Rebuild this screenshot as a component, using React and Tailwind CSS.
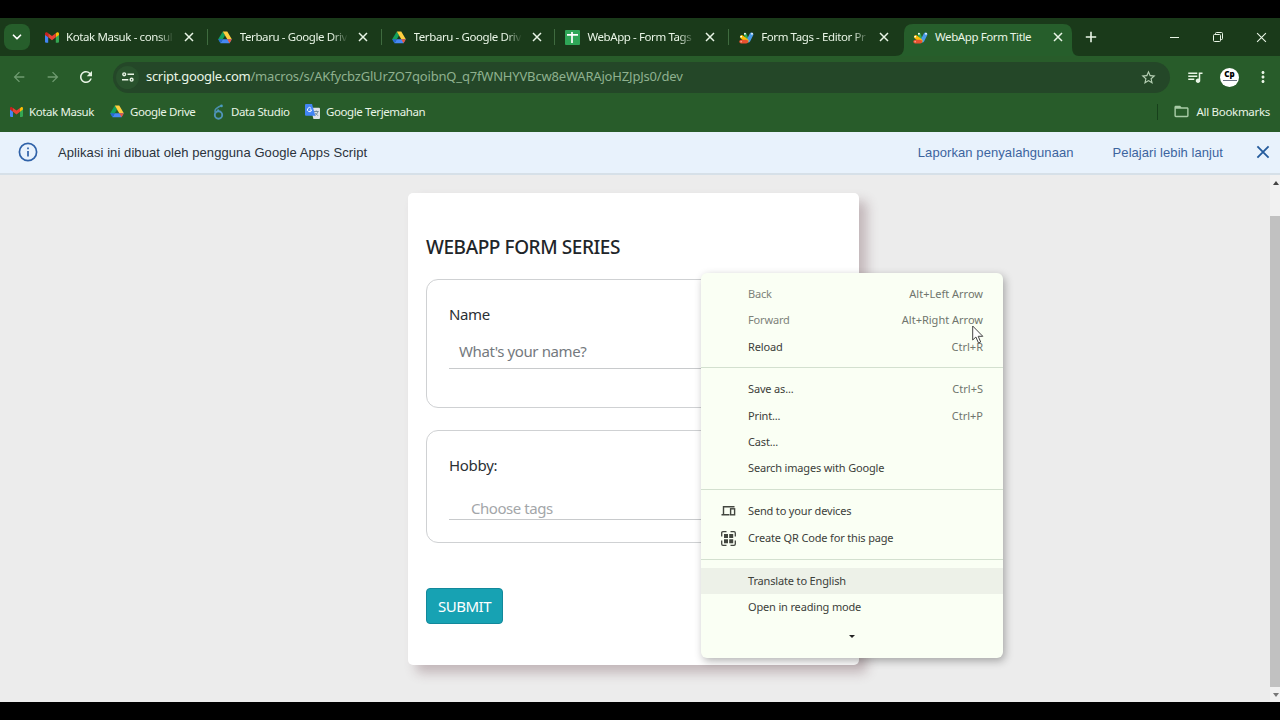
import { LuChevronDown } from "react-icons/lu";
import {
  MdArrowBack,
  MdArrowForward,
  MdRefresh,
  MdStarOutline,
  MdQueueMusic,
  MdMoreVert,
  MdFolderOpen,
} from "react-icons/md";

function GmailIcon({ className }) {
  return (
    <svg viewBox="0 0 24 18" className={className}>
      <path d="M0 3v13.4C0 17.3.7 18 1.600 18H5.500V7.500z" fill="#4285f4" />
      <path d="M18.500 7.500V18h3.900c.9 0 1.600-.7 1.600-1.600V3z" fill="#34a853" />
      <path d="M18.500 2v6.500L24 4.500V2.500c0-2.200-2.400-3.200-4-2z" fill="#fbbc04" />
      <path d="M5.500 8.500V1.500L12 6.400l6.500-4.900v7L12 13.500z" fill="#ea4335" />
      <path d="M0 2.500v2l5.500 4v-7L4 .5C2.400-.7 0 .3 0 2.500z" fill="#c5221f" />
    </svg>
  );
}

function DriveIcon({ className }) {
  return (
    <svg viewBox="0 0 24 22" className={className}>
      <path d="M8.200 0.500L0.300 14.200 4.200 21 12.100 7.300z" fill="#14a05c" />
      <path d="M8.200 0.500h7.700l7.800 13.700h-7.800z" fill="#ffcf3f" />
      <path d="M4.200 21l3.900-6.800h15.600L19.800 21z" fill="#4688f4" />
      <path d="M4.200 21l3.900-6.800L0.300 14.200z" fill="#2a66d9" />
      <path d="M19.800 21l-3.900-6.800h7.800z" fill="#e9573f" />
    </svg>
  );
}

function SheetsIcon({ className }) {
  return (
    <svg viewBox="0 0 15 15" className={className}>
      <rect width="15" height="15" rx="1" fill="#2fa657" />
      <path d="M2 4.800h11M7 2v11" stroke="#fff" strokeWidth="1.700" />
    </svg>
  );
}

function AppsScriptIcon({ className }) {
  return (
    <svg viewBox="0 0 24 20" className={className} strokeLinecap="round">
      <path d="M10 5l3.500 9" stroke="#34a853" strokeWidth="4.500" />
      <path d="M20 5l-5 10" stroke="#4a9be8" strokeWidth="6" />
      <path d="M4.500 9l8 6.500" stroke="#fbbc04" strokeWidth="6" />
      <path d="M3.500 16.500h8" stroke="#e8502f" strokeWidth="6" />
      <circle cx="3.500" cy="8.500" r="1.500" fill="#fff" />
      <circle cx="9.500" cy="4" r="1.500" fill="#fff" />
      <circle cx="20.800" cy="4" r="1.700" fill="#d8e8fb" />
      <circle cx="3.500" cy="16.500" r="1.400" fill="#f7a08f" />
    </svg>
  );
}

function DataStudioIcon({ className }) {
  return (
    <svg viewBox="0 0 12 16" className={className} fill="none">
      <circle cx="6" cy="11" r="3.700" stroke="#5094b8" strokeWidth="1.900" />
      <path d="M3.200 9.500Q1.500 6 4 4.300T8.800 1.800" stroke="#4b8fae" strokeWidth="1.600" />
      <circle cx="9" cy="1.900" r="1.300" fill="#4b9bc0" />
      <circle cx="5.600" cy="6.300" r="1" fill="#4b9bc0" />
    </svg>
  );
}

function TranslateIcon({ className }) {
  return (
    <svg viewBox="0 0 16 16" className={className}>
      <path d="M6 4h9a1 1 0 011 1v10a1 1 0 01-1 1H9z" fill="#dfe3e8" />
      <path d="M9.500 8h5M12 7v1M13.800 8c-.4 2-2 3.500-3.500 4.300M10.800 9.500l3 3" stroke="#6f8794" fill="none" />
      <path d="M1 0h6.500L11 12.500H1a1 1 0 01-1-1V1a1 1 0 011-1z" fill="#4285f4" />
      <path d="M6.500 4.600a2.200 2.200 0 10.5 1.700H5" stroke="#fff" fill="none" />
    </svg>
  );
}

function CloseIcon({ className }) {
  return (
    <svg viewBox="0 0 10 10" className={className} stroke="currentColor" fill="none">
      <path d="M1 1l8 8M9 1L1 9" />
    </svg>
  );
}

function DevicesIcon() {
  return (
    <svg viewBox="0 0 15 12" className="h-3 w-[15px]" fill="none" stroke="#42463f" strokeWidth="1.400">
      <path d="M2.500 9V1.700h11M0.500 9.800h8" />
      <rect x="9.600" y="3.800" width="4" height="6" />
    </svg>
  );
}

function QrIcon() {
  return (
    <svg viewBox="0 0 15 15" className="size-[15px]" fill="none" stroke="#42463f" strokeWidth="1.300">
      <path d="M5.500.7H2Q.7.700.7 2v3.500M9.500.7H13q1.300 0 1.300 1.300v3.500M.7 9.500V13q0 1.300 1.300 1.300h3.500M14.300 9.500V13q0 1.300-1.300 1.300H9.500" />
      <path d="M3 3h4v4H3zM8.200 3h4v4h-4zM3 8.200h4v4H3zM8.200 8.200h4v4h-4z" fill="#42463f" stroke="none" />
    </svg>
  );
}

const tabs = [
  { title: "Kotak Masuk - consul", Icon: GmailIcon, icon: "h-[11px] w-3.5" },
  { title: "Terbaru - Google Driv", Icon: DriveIcon, icon: "h-[13px] w-3.5" },
  { title: "Terbaru - Google Driv", Icon: DriveIcon, icon: "h-[13px] w-3.5" },
  { title: "WebApp - Form Tags", Icon: SheetsIcon, icon: "size-[15px]" },
  { title: "Form Tags - Editor Pr", Icon: AppsScriptIcon, icon: "h-[13px] w-[15px]" },
  { title: "WebApp Form Title", Icon: AppsScriptIcon, icon: "h-[13px] w-[15px]", active: true },
];

const bookmarks = [
  { label: "Kotak Masuk", Icon: GmailIcon, icon: "h-[10px] w-[13px]", box: "w-[100px]" },
  { label: "Google Drive", Icon: DriveIcon, icon: "h-[13px] w-[14px]", box: "w-[102px]" },
  { label: "Data Studio", Icon: DataStudioIcon, icon: "h-4 w-[13px]", box: "w-[93px]" },
  { label: "Google Terjemahan", Icon: TranslateIcon, icon: "size-[15px]", box: "w-[130px]" },
];

const menuGroups = [
  {
    pad: "pt-2 pb-[7px]",
    items: [
      { label: "Back", keys: "Alt+Left Arrow", disabled: true },
      { label: "Forward", keys: "Alt+Right Arrow", disabled: true },
      { label: "Reload", keys: "Ctrl+R" },
    ],
  },
  {
    pad: "pt-2 pb-[7px]",
    items: [
      { label: "Save as...", keys: "Ctrl+S" },
      { label: "Print...", keys: "Ctrl+P" },
      { label: "Cast..." },
      { label: "Search images with Google" },
    ],
  },
  {
    pad: "pt-2 pb-[7px]",
    items: [
      { label: "Send to your devices", Icon: DevicesIcon },
      { label: "Create QR Code for this page", Icon: QrIcon },
    ],
  },
  {
    pad: "pt-2",
    items: [{ label: "Translate to English", hover: true }, { label: "Open in reading mode" }],
  },
];

function Tab({ title, Icon, icon, active, last }) {
  return (
    <div className="relative flex h-full w-[173.800px] items-center">
      {active && (
        <svg viewBox="0 0 184 32" className="absolute bottom-0 -left-2 h-8 w-[184px]" fill="#265e2b">
          <path d="M0 32q9 0 9-9V9q0-9 9-9h150q9 0 9 9v14q0 9 7 9z" />
        </svg>
      )}
      <div className="relative flex w-full items-center pl-2.5">
        <span className="flex w-[15px] justify-center">
          <Icon className={icon} />
        </span>
        <span
          className={`ml-[7px] w-[108px] text-[11.500px] leading-5 tracking-[-0.400px] whitespace-nowrap text-[#e9f5e6] ${
            active ? "" : "mask-r-from-85% mask-r-to-100%"
          }`}
        >
          {title}
        </span>
        <CloseIcon className="ml-2.5 size-[10px] stroke-[1.500] text-[#e9f5e6]" />
      </div>
      {!active && !last && <span className="h-4 w-px shrink-0 bg-[#3f6b3f]" />}
    </div>
  );
}

function TabStrip() {
  return (
    <div className="flex h-[38px] items-center bg-[#1a3a1a]">
      <button className="ml-1 flex size-[26px] shrink-0 items-center justify-center rounded-lg bg-[#265e2b] text-white">
        <LuChevronDown className="size-3.5 stroke-[3]" />
      </button>
      <div className="ml-1 flex h-full">
        {tabs.map((tab, i) => (
          <Tab key={i} {...tab} last={i === tabs.length - 2} />
        ))}
      </div>
      <svg viewBox="0 0 12 12" className="ml-[8px] size-3" stroke="#e9f5e6" strokeWidth="1.600">
        <path d="M6 .8v10.400M.8 6h10.400" />
      </svg>
      <div className="ml-auto flex items-center pr-[13px] text-[#e9f5e6]">
        <span className="mr-[34px] h-px w-[9px] bg-[#e9f5e6]" />
        <svg viewBox="0 0 10 10" className="mr-[33px] size-2.5" fill="none" stroke="currentColor">
          <rect x=".5" y="2.500" width="7" height="7" rx="1" />
          <path d="M2.500 2V1.500q0-1 1-1h5q1 0 1 1v5q0 1-1 1H8" />
        </svg>
        <CloseIcon className="size-[11px] stroke-1" />
      </div>
    </div>
  );
}

function Toolbar() {
  return (
    <div className="flex h-[42px] items-center text-[#e9f5e6]">
      <MdArrowBack className="ml-[11px] size-4 text-[#6f9b70]" />
      <MdArrowForward className="ml-[18px] size-4 text-[#6f9b70]" />
      <MdRefresh className="ml-4 size-[18px]" />
      <div className="ml-[18px] flex h-[31px] w-[1057px] items-center rounded-full bg-[#244728]">
        <span className="ml-[3px] flex size-[23px] items-center justify-center rounded-full bg-[#29522d]">
          <svg viewBox="0 0 12 10" className="h-2.5 w-3" fill="none" stroke="#e9f5e6" strokeWidth="1.400">
            <circle cx="2.200" cy="2.300" r="1.400" />
            <circle cx="9.600" cy="7.700" r="1.400" />
            <path d="M5.500 2.300H12M0 7.700h6.300" />
          </svg>
        </span>
        <p className="ml-[7px] text-[13px] whitespace-nowrap text-[#8fb18f]">
          <span className="tracking-[-0.300px] text-[#e9f5e6]">script.google.com</span>
          <span className="tracking-[-0.180px]">/macros/s/AKfycbzGlUrZO7qoibnQ_q7fWNHYVBcw8eWARAjoHZJpJs0/dev</span>
        </p>
        <MdStarOutline className="mr-[13px] ml-auto size-[17px] text-[#b5cfb3]" />
      </div>
      <MdQueueMusic className="ml-4 size-[18px]" />
      <span className="ml-4 flex size-[19px] flex-col items-center rounded-full bg-white text-[8px] leading-[12px] font-black text-black">
        Cp
        <span className="h-px w-3.5 bg-gray-500" />
      </span>
      <MdMoreVert className="ml-[15px] size-[18px]" />
    </div>
  );
}

function BookmarksBar() {
  return (
    <div className="flex h-[27px] items-center pl-2.5 text-[11.500px] tracking-[-0.400px] text-[#e9f5e6]">
      {bookmarks.map(({ label, Icon, icon, box }) => (
        <div key={label} className={`flex shrink-0 items-center ${box}`}>
          <Icon className={`shrink-0 ${icon}`} />
          <span className="ml-[6px] whitespace-nowrap">{label}</span>
        </div>
      ))}
      <span className="ml-auto h-4 w-px bg-[#17401b]" />
      <MdFolderOpen className="ml-[15px] size-[17px] text-[#a8cba6]" />
      <span className="mr-2.5 ml-1.5 tracking-[-0.300px]">All Bookmarks</span>
    </div>
  );
}

function InfoBar() {
  return (
    <div className="flex h-[43px] items-center border-b-2 border-[#d6e0e8] bg-[#e8f2fc] font-['Liberation_Sans',sans-serif] text-[13px] text-[#2b323b]">
      <svg viewBox="0 0 20 20" className="ml-[18px] size-5" fill="none" stroke="#2f62a8" strokeWidth="1.700">
        <circle cx="10" cy="10" r="8.600" />
        <path d="M10 9v5.500M10 5.500v1.800" />
      </svg>
      <span className="ml-5 tracking-[0.080px]">Aplikasi ini dibuat oleh pengguna Google Apps Script</span>
      <a className="ml-auto tracking-[0.080px] text-[#3c649f]">Laporkan penyalahgunaan</a>
      <a className="ml-[39px] tracking-[0.060px] text-[#3c649f]">Pelajari lebih lanjut</a>
      <CloseIcon className="mr-2.5 ml-[33px] size-3.5 stroke-[1.300] text-[#245b9c]" />
    </div>
  );
}

function FormCard() {
  return (
    <form className="mt-[18px] ml-[408px] h-[472px] w-[451px] rounded-[5px] bg-white px-[18px] text-[15px] text-[#2b3035] shadow-[8px_8px_12px_rgba(110,70,80,0.32)]">
      <h1 className="pt-10 text-[19px] leading-7 font-medium tracking-[-0.420px] text-[#212529]">
        WEBAPP FORM SERIES
      </h1>
      <div className="mt-[18px] h-[129px] rounded-xl border border-[#cfd1d3] px-[22px] pt-6">
        <label className="block leading-5 tracking-[-0.400px]">Name</label>
        <div className="mt-2.5 h-[35px] border-b border-[#c8cacc] px-2.5 pt-[7px] leading-5 tracking-[-0.400px] text-[#74797e]">
          What's your name?
        </div>
      </div>
      <div className="mt-[22px] h-[113px] rounded-xl border border-[#cfd1d3] px-[22px] pt-6">
        <label className="block leading-5 tracking-[-0.300px]">Hobby:</label>
        <div className="mt-[23px] h-[22px] border-b border-[#c8cacc] px-[22px] leading-[20px] tracking-[-0.450px] text-[#a3a6a9]">
          Choose tags
        </div>
      </div>
      <button
        type="button"
        className="mt-[45px] h-9 w-[77px] rounded border border-[#12889b] bg-[#17a2b3] text-[15px] tracking-[-0.500px] text-white"
      >
        SUBMIT
      </button>
    </form>
  );
}

function ContextMenu() {
  return (
    <div className="absolute top-[273px] left-[701px] h-[385px] w-[302px] rounded-md bg-[#fafff4] text-[11px] text-[#3c403a] shadow-[2px_3px_9px_rgba(0,0,0,0.3)]">
      {menuGroups.map((group, i) => (
        <ul key={i} className={`${group.pad} ${i > 0 ? "border-t border-[#d3e0cf]" : ""}`}>
          {group.items.map(({ label, keys, Icon, disabled, hover }) => (
            <li
              key={label}
              className={`flex items-center pr-5 ${Icon ? "h-[27px]" : "h-[26.400px]"} ${
                disabled ? "text-[#7d827a]" : ""
              } ${hover ? "bg-[#edf1e8]" : ""}`}
            >
              <span className="flex w-[47px] justify-center pl-2">{Icon && <Icon />}</span>
              <span className="tracking-[-0.160px]">{label}</span>
              <span className="ml-auto text-[#70756d]">{keys}</span>
            </li>
          ))}
        </ul>
      ))}
      <div className="mt-3.5 flex justify-center">
        <svg viewBox="0 0 6 3" className="h-[3px] w-1.5" fill="#222">
          <path d="M0 0h6L3 3z" />
        </svg>
      </div>
    </div>
  );
}

function Scrollbar() {
  return (
    <div className="ml-auto flex w-2.5 flex-col items-center bg-[#f1f1f1]">
      <svg viewBox="0 0 6 4" className="mt-1.5 ml-0.5 h-1 w-1.5 shrink-0" fill="#444">
        <path d="M0 4h6L3 0z" />
      </svg>
      <span className="mt-[31px] h-[471px] w-full bg-[#c1c1c1]" />
      <svg viewBox="0 0 6 4" className="mt-1.5 ml-0.5 h-1 w-1.5 shrink-0" fill="#777">
        <path d="M0 0h6L3 4z" />
      </svg>
    </div>
  );
}

export default function App() {
  return (
    <div className="relative flex h-[720px] w-[1280px] flex-col overflow-hidden bg-black py-[18px] font-['Noto_Sans',sans-serif]">
      <header className="h-[114px] shrink-0 bg-[#285c2a]">
        <TabStrip />
        <Toolbar />
        <BookmarksBar />
      </header>
      <InfoBar />
      <main className="flex h-[528px] overflow-hidden bg-[#ececec]">
        <FormCard />
        <Scrollbar />
      </main>
      <ContextMenu />
      <svg viewBox="0 0 12 19" className="absolute top-[325px] left-[972px] h-[19px] w-3" fill="#fff" stroke="#444">
        <path d="M.7 1v14l3.200-3 2.600 6 2.200-1-2.500-5.700h4.600z" />
      </svg>
    </div>
  );
}
